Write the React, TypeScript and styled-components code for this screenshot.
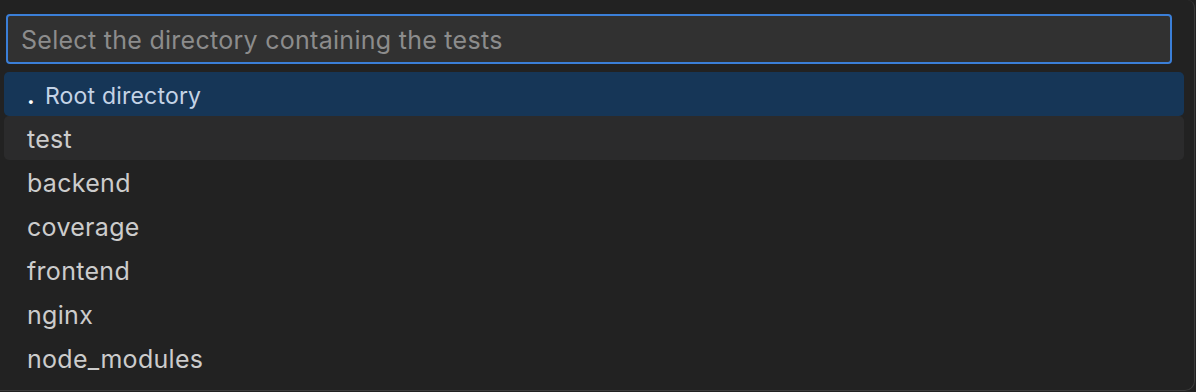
import React from 'react';
import styled, { createGlobalStyle } from 'styled-components';

const GlobalStyle = createGlobalStyle`
  html, body {
    margin: 0;
    padding: 0;
    background: #222222;
  }
  body {
    font-family: Inter, "Noto Sans", "Liberation Sans", sans-serif;
    -webkit-font-smoothing: antialiased;
  }
`;

const Panel = styled.div`
  box-sizing: border-box;
  width: 1195px;
  height: 391px;
  background: #222222;
  border-right: 1px solid #3b3b3b;
  border-bottom: 1px solid #3b3b3b;
  border-radius: 0 8px 10px 0;
  padding: 14px 0 0 0;
  overflow: hidden;
`;

const InputBox = styled.div`
  box-sizing: border-box;
  margin-left: 6px;
  width: 1166px;
  height: 50px;
  background: #313131;
  border: 2px solid #3b7fd8;
  border-radius: 4px;
  display: flex;
  align-items: center;
  padding: 2px 0 0 13px;
`;

const Placeholder = styled.span`
  font-size: 25px;
  color: #8c8c8c;
  letter-spacing: 0.28px;
  line-height: 1;
`;

const List = styled.div`
  margin-top: 8px;
  margin-left: 4px;
  width: 1180px;
  display: flex;
  flex-direction: column;
`;

const Row = styled.div<{ $state?: 'selected' | 'hover' }>`
  box-sizing: border-box;
  height: 44px;
  display: flex;
  align-items: center;
  gap: 10px;
  padding: ${(p) => (p.$state === 'selected' ? '3px' : '2px')} 0 0 23px;
  border-radius: 5px;
  font-size: ${(p) => (p.$state === 'selected' ? '23px' : '25px')};
  letter-spacing: ${(p) => (p.$state === 'selected' ? '0.2px' : '0.3px')};
  color: ${(p) => (p.$state === 'selected' ? '#c4d3e6' : '#cccccc')};
  background: ${(p) =>
    p.$state === 'selected'
      ? '#163657'
      : p.$state === 'hover'
      ? '#2b2b2c'
      : 'transparent'};
`;

const Dot = styled.span`
  color: #ffffff;
  font-weight: 700;
`;

const items = ['backend', 'coverage', 'frontend', 'nginx', 'node_modules'];

export default function App() {
  return (
    <>
      <GlobalStyle />
      <Panel>
        <InputBox>
          <Placeholder>Select the directory containing the tests</Placeholder>
        </InputBox>
        <List>
          <Row $state="selected">
            <Dot>.</Dot>
            <span>Root directory</span>
          </Row>
          <Row $state="hover">test</Row>
          {items.map((name) => (
            <Row key={name}>{name}</Row>
          ))}
        </List>
      </Panel>
    </>
  );
}
